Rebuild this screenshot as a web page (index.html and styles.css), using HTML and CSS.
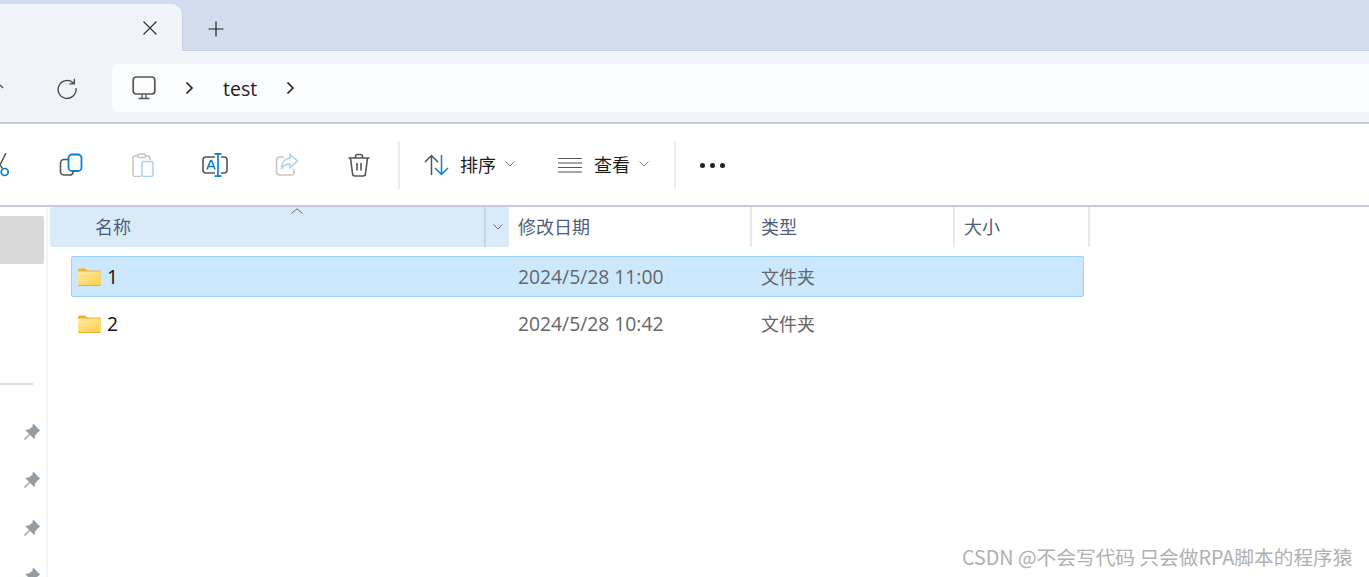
FILE: index.html
```html
<!DOCTYPE html>
<html lang="zh-CN">
<head>
<meta charset="utf-8">
<title>test</title>
<link rel="stylesheet" href="styles.css">
</head>
<body>
<div class="window">
  <div class="tabbar">
    <div class="tab">
      <svg class="tab-close" width="16" height="16" viewBox="0 0 16 16"><path d="M1.5 1.5 14.5 14.5M14.5 1.5 1.5 14.5" stroke="#333" stroke-width="1.2" fill="none"/></svg>
    </div>
    <svg class="tab-new" width="16" height="16" viewBox="0 0 16 16"><path d="M8 .5V15.5M.5 8H15.5" stroke="#222" stroke-width="1.2" fill="none"/></svg>
  </div>
  <div class="navbar">
    <svg class="nav-up" width="8" height="6" viewBox="0 0 8 6"><path d="M0 1 3 4" stroke="#444" stroke-width="1.2" fill="none"/></svg>
    <svg class="nav-refresh" width="22" height="22" viewBox="0 0 22 22"><path d="M17.6 6.2A9 9 0 1 0 20 11" stroke="#444" stroke-width="1.3" fill="none"/><path d="M18.3 1.8V6.8H13.3" stroke="#444" stroke-width="1.3" fill="none"/></svg>
    <div class="crumbs">
      <svg width="24" height="24" viewBox="0 0 24 24"><rect x="1.2" y="1" width="21.6" height="17" rx="3" stroke="#555" stroke-width="1.7" fill="none"/><path d="M10 18.5V22M14 18.5V22M6.5 22.5H17.5" stroke="#555" stroke-width="1.4" fill="none"/></svg>
      <svg class="crumb-sep first" width="9" height="14" viewBox="0 0 9 14"><path d="M1.5 1.5 7 7 1.5 12.5" stroke="#222" stroke-width="1.7" fill="none"/></svg>
      <span class="crumb-text">test</span>
      <svg class="crumb-sep" width="9" height="14" viewBox="0 0 9 14"><path d="M1.5 1.5 7 7 1.5 12.5" stroke="#222" stroke-width="1.7" fill="none"/></svg>
    </div>
  </div>
  <div class="toolbar">
    <div class="tool">
      <svg width="24" height="24" viewBox="0 0 24 24"><path d="M19 0 13 12 15.5 15.5" stroke="#555" stroke-width="1.5" fill="none"/><circle cx="17.7" cy="19" r="3.5" stroke="#0a7fd6" stroke-width="1.7" fill="none"/></svg>
    </div>
    <div class="tool">
      <svg width="24" height="24" viewBox="0 0 24 24"><path d="M9.5 6.5H5A3.5 3.5 0 0 0 1.5 10V18.5A3.5 3.5 0 0 0 5 22H11A3 3 0 0 0 14 19.5V18" stroke="#555" stroke-width="1.6" fill="none"/><rect x="9.5" y="1.5" width="13" height="16.5" rx="3.5" stroke="#0a7fd6" stroke-width="1.8" fill="#fff"/></svg>
    </div>
    <div class="tool">
      <svg width="24" height="24" viewBox="0 0 24 24"><path d="M6 3H4A2 2 0 0 0 2 5V21.5A2 2 0 0 0 4 23.5H10M15 3H17A2 2 0 0 1 19 5V7" stroke="#c6c6c6" stroke-width="1.6" fill="none"/><rect x="6.5" y="1" width="8" height="3.5" rx="1.5" stroke="#c6c6c6" stroke-width="1.5" fill="#fff"/><rect x="11" y="8.5" width="11" height="15" rx="2" stroke="#a8d2f4" stroke-width="1.6" fill="#fff"/></svg>
    </div>
    <div class="tool">
      <svg width="26" height="24" viewBox="0 0 26 24"><path d="M13 4H4A3 3 0 0 0 1 7V17A3 3 0 0 0 4 20H13M19 4H22A3 3 0 0 1 25 7V17A3 3 0 0 1 22 20H19" stroke="#555" stroke-width="1.6" fill="none"/><path d="M5 16.5 8.6 7.5H9.6L13 16.5M6.2 13.5H11.8" stroke="#0a7fd6" stroke-width="1.6" fill="none"/><path d="M12.5 .8H19.5M16 .8V23.2M12.5 23.2H19.5" stroke="#0a7fd6" stroke-width="1.7" fill="none"/></svg>
    </div>
    <div class="tool">
      <svg width="24" height="24" viewBox="0 0 24 24"><path d="M9 4H4A3 3 0 0 0 1.5 7V19A3 3 0 0 0 4 22H16A3 3 0 0 0 19 19V16" stroke="#c8c8c8" stroke-width="1.6" fill="none"/><path d="M15 1.5 22.5 8 15 14.5V11C11 11 8 12.5 6.5 16 6.5 10 9.5 5.5 15 5Z" stroke="#a8d2f4" stroke-width="1.5" fill="#fff"/></svg>
    </div>
    <div class="tool">
      <svg width="24" height="24" viewBox="0 0 24 24"><path d="M1.5 5H22.5M8.5 4.5V3.5A2 2 0 0 1 10.5 1.5H13.5A2 2 0 0 1 15.5 3.5V4.5" stroke="#555" stroke-width="1.6" fill="none"/><path d="M3.5 5 5.5 20.5A2.5 2.5 0 0 0 8 23H16A2.5 2.5 0 0 0 18.5 20.5L20.5 5" stroke="#555" stroke-width="1.6" fill="none"/><path d="M10 10V17.5M14 10V17.5" stroke="#555" stroke-width="1.6" fill="none"/></svg>
    </div>
    <div class="tool-sep"></div>
    <div class="menu sort-menu">
      <svg width="25" height="22" viewBox="0 0 25 22"><path d="M7.5 21V1.5M1 8 7.5 1.5 14 8" stroke="#555" stroke-width="1.5" fill="none"/><path d="M17.5 1V20.5M11 14 17.5 20.5 24 14" stroke="#0a7fd6" stroke-width="1.5" fill="none"/></svg>
      <span>排序</span>
      <svg class="caret" width="10" height="6" viewBox="0 0 10 6"><path d="M.5 .5 5 5 9.5 .5" stroke="#777" stroke-width="1" fill="none"/></svg>
    </div>
    <div class="menu view-menu">
      <svg width="24" height="16" viewBox="0 0 24 16"><path d="M0 1.5H24M0 6H24M0 10.5H24M0 15H24" stroke="#555" stroke-width="1.2" fill="none"/></svg>
      <span>查看</span>
      <svg class="caret" width="10" height="6" viewBox="0 0 10 6"><path d="M.5 .5 5 5 9.5 .5" stroke="#777" stroke-width="1" fill="none"/></svg>
    </div>
    <div class="tool-sep second"></div>
    <div class="dots"><i></i><i></i><i></i></div>
  </div>
  <div class="main">
    <aside class="sidebar">
      <div class="side-active"></div>
      <div class="side-rule"></div>
      <ul class="pins">
        <li><svg width="17" height="17" viewBox="0 0 17 17"><path d="M10.5 .8 16.2 6.5 14.5 7.6 11.6 11 11 14 3.5 6.5 6.5 6 10 3Z M6.5 10.5 1.5 15.5" fill="#929ca4" stroke="#929ca4" stroke-width="1.3"/></svg></li>
        <li><svg width="17" height="17" viewBox="0 0 17 17"><path d="M10.5 .8 16.2 6.5 14.5 7.6 11.6 11 11 14 3.5 6.5 6.5 6 10 3Z M6.5 10.5 1.5 15.5" fill="#929ca4" stroke="#929ca4" stroke-width="1.3"/></svg></li>
        <li><svg width="17" height="17" viewBox="0 0 17 17"><path d="M10.5 .8 16.2 6.5 14.5 7.6 11.6 11 11 14 3.5 6.5 6.5 6 10 3Z M6.5 10.5 1.5 15.5" fill="#929ca4" stroke="#929ca4" stroke-width="1.3"/></svg></li>
        <li><svg width="17" height="17" viewBox="0 0 17 17"><path d="M10.5 .8 16.2 6.5 14.5 7.6 11.6 11 11 14 3.5 6.5 6.5 6 10 3Z M6.5 10.5 1.5 15.5" fill="#929ca4" stroke="#929ca4" stroke-width="1.3"/></svg></li>
      </ul>
    </aside>
    <section class="files">
      <div class="head">
        <div class="col-name">
          <svg class="sort-arrow" width="12" height="6" viewBox="0 0 12 6"><path d="M.5 5.5 6 .8 11.5 5.5" stroke="#666" stroke-width="1" fill="none"/></svg>
          <span>名称</span>
          <div class="col-drop"><svg width="10" height="6" viewBox="0 0 10 6"><path d="M.5 .5 5 5 9.5 .5" stroke="#667" stroke-width="1" fill="none"/></svg></div>
        </div>
        <div class="col col-date">修改日期</div>
        <div class="col col-type">类型</div>
        <div class="col col-size">大小</div>
      </div>
      <div class="row selected">
        <div class="cell-name">
          <svg width="23" height="18" viewBox="0 0 23 18"><path d="M0 2A1.5 1.5 0 0 1 1.5 .5H7L10 3H0Z" fill="#f7b21f"/><rect y="2.5" width="22.5" height="15.5" fill="#edb02c"/><rect y="3.5" width="22.5" height="13.5" fill="url(#fold1)"/><defs><linearGradient id="fold1" x1="0" y1="0" x2="1" y2="1"><stop offset="0" stop-color="#ffe9a3"/><stop offset="1" stop-color="#ffd04a"/></linearGradient></defs></svg>
          <span>1</span>
        </div>
        <div class="cell-date">2024/5/28 11:00</div>
        <div class="cell-type">文件夹</div>
      </div>
      <div class="row">
        <div class="cell-name">
          <svg width="23" height="18" viewBox="0 0 23 18"><path d="M0 2A1.5 1.5 0 0 1 1.5 .5H7L10 3H0Z" fill="#f7b21f"/><rect y="2.5" width="22.5" height="15.5" fill="#edb02c"/><rect y="3.5" width="22.5" height="13.5" fill="url(#fold2)"/><defs><linearGradient id="fold2" x1="0" y1="0" x2="1" y2="1"><stop offset="0" stop-color="#ffe9a3"/><stop offset="1" stop-color="#ffd04a"/></linearGradient></defs></svg>
          <span>2</span>
        </div>
        <div class="cell-date">2024/5/28 10:42</div>
        <div class="cell-type">文件夹</div>
      </div>
    </section>
  </div>
  <div class="watermark">CSDN @不会写代码 只会做RPA脚本的程序猿</div>
</div>
</body>
</html>
```
FILE: styles.css
```css
* { box-sizing: border-box; }
html, body { margin: 0; height: 100%; overflow: hidden; background: #fff; }
body { font-family: "Open Sans", "Noto Sans CJK SC", sans-serif; font-size: 18px; color: #1c1c1c; }
svg { display: block; flex: none; }
.window { position: relative; width: 1369px; height: 577px; overflow: hidden; display: flex; flex-direction: column; }

.tabbar { height: 52px; flex: none; background: #d3dcec; border-bottom: 2px solid #c6cfe2; display: flex; align-items: flex-start; }
.tab { width: 182px; height: 48px; margin-top: 4px; background: #f0f4f9; border-top-right-radius: 10px; display: flex; align-items: center; justify-content: flex-end; padding: 0 24px 0 0; box-shadow: 1px 0 0 #c9d2e4; position: relative; z-index: 1; }
.tab-new { margin: 21px 0 0 26px; }

.navbar { height: 73px; flex: none; margin-top: -1px; background: #f0f4f9; border-bottom: 2px solid #c6cbdc; display: flex; align-items: center; position: relative; z-index: 2; padding-top: 3px; }
.nav-up { margin: 0 0 3px 0; }
.nav-refresh { margin: 0 0 0 48px; }
.crumbs { margin-left: 34px; flex: 1; height: 48px; background: #fbfcfe; border-radius: 6px 0 0 6px; display: flex; align-items: center; padding-left: 20px; }
.crumb-sep { margin-left: 29px; }
.crumb-text { margin-left: 29px; font-size: 19.5px; color: #222; width: 34px; white-space: nowrap; }

.toolbar { height: 81px; flex: none; background: #fff; display: flex; align-items: center; margin-left: -37px; }
.tool { width: 72px; display: flex; justify-content: center; }
.tool-sep { width: 2px; height: 48px; background: #ececec; margin-left: 3px; }
.menu { display: flex; align-items: center; color: #1c1c1c; font-size: 18px; white-space: nowrap; }
.sort-menu { margin-left: 24px; }
.sort-menu span { margin-left: 11px; width: 37px; padding-bottom: 2px; }
.view-menu { margin-left: 43px; }
.view-menu span { margin-left: 12px; width: 37px; padding-bottom: 2px; }
.caret { margin-left: 8px; margin-top: -1px; }
.tool-sep.second { margin-left: 25px; }
.dots { display: flex; gap: 5px; margin: 2px 0 0 24px; }
.dots i { display: block; width: 5px; height: 5px; border-radius: 50%; background: #222; }

.main { flex: 1; display: flex; border-top: 2px solid #c6cbdc; min-height: 0; }
.sidebar { width: 48px; flex: none; border-right: 2px solid #f3f3f3; padding-top: 9px; }
.side-active { width: 44px; height: 48px; background: #d9d9d9; border-radius: 0 2px 2px 0; }
.side-rule { width: 33px; height: 2px; background: #dcdcdc; margin-top: 119px; }
.pins { list-style: none; margin: 39px 0 0; padding: 0 0 0 23px; display: flex; flex-direction: column; gap: 31px; }

.files { flex: 1; min-width: 0; }
.head { height: 40px; display: flex; color: #4c607a; font-size: 18px; }
.col-name { width: 459px; margin-left: 2px; background: #d9eaf9; border-radius: 2px; display: flex; align-items: center; padding-left: 45px; position: relative; }
.col-name span { flex: 1; padding-bottom: 2px; }
.sort-arrow { position: absolute; left: 241px; top: 1px; }
.col-drop { width: 25px; height: 100%; border-left: 2px solid #c6d6e6; display: flex; align-items: center; justify-content: center; }
.col { display: flex; align-items: center; padding: 0 0 2px 9px; border-right: 2px solid #e8e8e8; white-space: nowrap; }
.col-date { width: 243px; }
.col-type { width: 203px; }
.col-size { width: 135px; }

.row { width: 1013px; height: 41px; margin: 9px 0 6px 23px; display: flex; align-items: center; border: 1px solid transparent; border-radius: 2px; color: #666; font-size: 18px; }
.row + .row { margin-top: 6px; }
.row.selected { background: #cce8ff; border-color: #99d1ff; }
.cell-name { width: 446px; display: flex; align-items: center; padding-left: 6px; color: #111; font-size: 19.3px; }
.cell-name span { margin-left: 6px; }
.cell-date { width: 243px; white-space: nowrap; font-size: 19.3px; }
.cell-type { white-space: nowrap; padding-bottom: 2px; }

.watermark { position: absolute; left: 962px; top: 543px; font-family: "Noto Sans CJK SC", sans-serif; font-size: 19.7px; line-height: 28px; color: #b0b0b0; white-space: nowrap; }
```
